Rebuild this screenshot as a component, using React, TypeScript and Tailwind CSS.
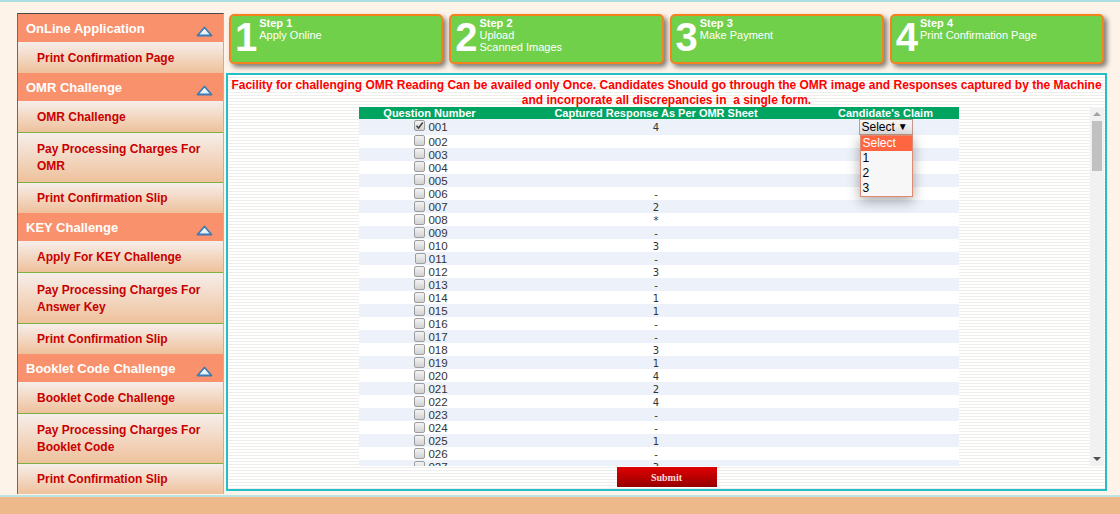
import React from "react";

const Arrow = () => (
  <svg width="17" height="11" viewBox="0 0 17 11" className="shrink-0 mt-[4px]">
    <defs>
      <linearGradient id="ag" x1="0" y1="0" x2="0" y2="1">
        <stop offset="0" stopColor="#ffffff" />
        <stop offset="1" stopColor="#d8ecf8" />
      </linearGradient>
    </defs>
    <polygon points="1.5,9.5 8.5,1.5 15.5,9.5" fill="url(#ag)" stroke="#3f7bb2" strokeWidth="1.8" strokeLinejoin="round" />
  </svg>
);

type Group = { title: string; items: { label: string[] }[] };

const groups: Group[] = [
  { title: "OnLine Application", items: [{ label: ["Print Confirmation Page"] }] },
  {
    title: "OMR Challenge",
    items: [
      { label: ["OMR Challenge"] },
      { label: ["Pay Processing Charges For", "OMR"] },
      { label: ["Print Confirmation Slip"] },
    ],
  },
  {
    title: "KEY Challenge",
    items: [
      { label: ["Apply For KEY Challenge"] },
      { label: ["Pay Processing Charges For", "Answer Key"] },
      { label: ["Print Confirmation Slip"] },
    ],
  },
  {
    title: "Booklet Code Challenge",
    items: [
      { label: ["Booklet Code Challenge"] },
      { label: ["Pay Processing Charges For", "Booklet Code"] },
      { label: ["Print Confirmation Slip"] },
    ],
  },
];

const steps = [
  { n: "1", t: "Step 1", d: ["Apply Online"] },
  { n: "2", t: "Step 2", d: ["Upload", "Scanned Images"] },
  { n: "3", t: "Step 3", d: ["Make Payment"] },
  { n: "4", t: "Step 4", d: ["Print Confirmation Page"] },
];

const vals = ["4", "", "", "", "", "-", "2", "*", "-", "3", "-", "3", "-", "1", "1", "-", "-", "3", "1", "4", "2", "4", "-", "-", "1", "-", "3"];

const Checkbox = ({ checked }: { checked?: boolean }) => (
  <span className="relative inline-block w-[11px] h-[11px] rounded-[2px] border border-[#9d9d9d] bg-linear-to-b from-[#f4f4f4] to-[#d2d2d2] mb-[3px] shrink-0">
    {checked && (
      <svg width="11" height="11" viewBox="0 0 11 11" className="absolute -left-[1px] -top-[1px]">
        <path d="M2.5 5.8 L4.6 8 L8.8 2.6" fill="none" stroke="#444" strokeWidth="1.6" />
      </svg>
    )}
  </span>
);

export default function App() {
  return (
    <div className="w-[1120px] h-[514px] overflow-hidden bg-[#fdf3e8] flex flex-col font-['Liberation_Sans',Arial,sans-serif]">
      <div className="h-[2px] bg-[#a9dee3] shrink-0" />
      <div className="flex flex-1 min-h-0 pl-[17px] pr-[13px] pt-[11px]">
        {/* Sidebar */}
        <div className="w-[207px] shrink-0 border-l border-t border-l-[#6a6a6a] border-t-[#4a4a4a] border-r border-r-[#b4b4b4] self-start">
          {groups.map((g, gi) => (
            <div key={g.title}>
              <div className="h-[28px] bg-[#f9926c] flex items-center justify-between pl-[8px] pr-[10px] pt-[2px]">
                <span className="text-white font-bold text-[13px]">{g.title}</span>
                <Arrow />
              </div>
              {g.items.map((it, i) => (
                <div
                  key={i}
                  className={`${it.label.length > 1 ? (gi === 2 ? "h-[51px]" : "h-[50px]") : "h-[31px]"} ${i > 0 ? "border-t border-[#7db040]" : ""} bg-linear-to-b from-[#f6eeea] to-[#eec19b] flex flex-col justify-center pl-[19px] pt-[1px] text-[#c80000] font-bold text-[12px] leading-[17px]`}
                >
                  {it.label.map((l) => (
                    <span key={l}>{l}</span>
                  ))}
                </div>
              ))}
            </div>
          ))}
        </div>

        {/* Main */}
        <div className="ml-[2px] w-[881px] flex flex-col">
          <div className="grid grid-cols-4 gap-[6px] px-[3px] pt-[1px]">
            {steps.map((s) => (
              <div
                key={s.n}
                className="h-[50px] rounded-[5px] border-2 border-[#f3831f] bg-[#71d04a] shadow-[3px_3px_5px_rgba(0,0,0,0.5)] flex items-start pl-[4px] pt-[1px] gap-[2px] text-white"
              >
                <span className="text-[40px] leading-[40px] font-bold">{s.n}</span>
                <div className="flex flex-col text-[11px] leading-[12px]">
                  <span className="font-bold">{s.t}</span>
                  {s.d.map((d) => (
                    <span key={d}>{d}</span>
                  ))}
                </div>
              </div>
            ))}
          </div>

          <div className="mt-[9px] h-[418px] border-2 border-[#22bfc7] flex flex-col bg-[repeating-linear-gradient(180deg,#ffffff_0px,#ffffff_2px,#efeeeb_2px,#efeeeb_3px)]">
            <div className="h-[32px] pt-[3px] text-center text-[#ff0000] font-bold text-[12px] leading-[15px] whitespace-nowrap overflow-visible">
              <div>Facility for challenging OMR Reading Can be availed only Once. Candidates Should go through the OMR image and Responses captured by the Machine</div>
              <div>and incorporate all discrepancies in&nbsp; a single form.</div>
            </div>

            <div className="h-[359px] flex shrink-0">
              <div className="flex-1 overflow-hidden">
                <div className="w-[600px] mx-auto">
                  <div className="grid grid-cols-[141px_312px_147px] h-[12px] bg-[#00a461] text-white font-bold text-[11px] leading-[12px] text-center">
                    <span>Question Number</span>
                    <span>Captured Response As Per OMR Sheet</span>
                    <span>Candidate's Claim</span>
                  </div>
                  {vals.map((v, i) => {
                    const num = String(i + 1).padStart(3, "0");
                    return (
                      <div
                        key={num}
                        className={`grid grid-cols-[141px_312px_147px] ${i === 0 ? "h-[16px]" : "h-[13px]"} ${i % 2 === 0 ? "bg-[#edf1fa]" : "bg-white"}`}
                      >
                        <div className="flex items-center justify-center gap-[3px] pl-[3px] text-[11.5px] text-[#333]">
                          <Checkbox checked={i === 0} />
                          <span className="leading-[13px]">{num}</span>
                        </div>
                        <div className="flex items-center justify-center font-['DejaVu_Sans',Verdana,sans-serif] text-[10px] text-[#333]">
                          {v}
                        </div>
                        <div className="flex items-center justify-center">
                          {i === 0 && (
                            <div className="relative w-[54px] h-[16px] z-10">
                              <div className="w-full h-full border border-[#c49a8a] bg-linear-to-b from-[#f6f6f6] to-[#e4e4e4] flex items-center pl-[2px] text-[12px] text-black leading-none">
                                <span>Select</span>
                                <span className="text-[10px] ml-[3px]">▼</span>
                              </div>
                              <div className="absolute left-[1px] top-[16px] w-[53px] border border-[#df8a72] bg-[#f7f7f7] shadow-[0_4px_12px_rgba(0,0,0,0.35)] text-[12px] leading-[15px] text-black">
                                <div className="bg-[#ff6541] text-white pl-[2px]">Select</div>
                                <div className="pl-[2px]">1</div>
                                <div className="pl-[2px]">2</div>
                                <div className="pl-[2px]">3</div>
                              </div>
                            </div>
                          )}
                        </div>
                      </div>
                    );
                  })}
                </div>
              </div>
              {/* fake scrollbar */}
              <div className="w-[14px] mr-[1px] bg-[#f1f1f1] flex flex-col items-center">
                <div className="mt-[5px] w-0 h-0 border-l-[4px] border-r-[4px] border-b-[4px] border-l-transparent border-r-transparent border-b-[#a3a3a3]" />
                <div className="mt-[5px] w-[10px] h-[50px] bg-[#c1c1c1]" />
                <div className="flex-1" />
                <div className="mb-[5px] w-0 h-0 border-l-[4px] border-r-[4px] border-t-[4px] border-l-transparent border-r-transparent border-t-[#505050]" />
              </div>
            </div>

            <div className="flex justify-center pt-[1px]">
              <div className="w-[100px] h-[20px] bg-linear-to-b from-[#e00000] to-[#960000] flex items-center justify-center font-['Liberation_Serif',serif] font-bold text-[10px] text-[#ffdede]">
                Submit
              </div>
            </div>
          </div>
        </div>
      </div>
      <div className="h-[2px] bg-[#bde4e4] shrink-0" />
      <div className="h-[17px] bg-[#eeb98a] shrink-0" />
    </div>
  );
}
